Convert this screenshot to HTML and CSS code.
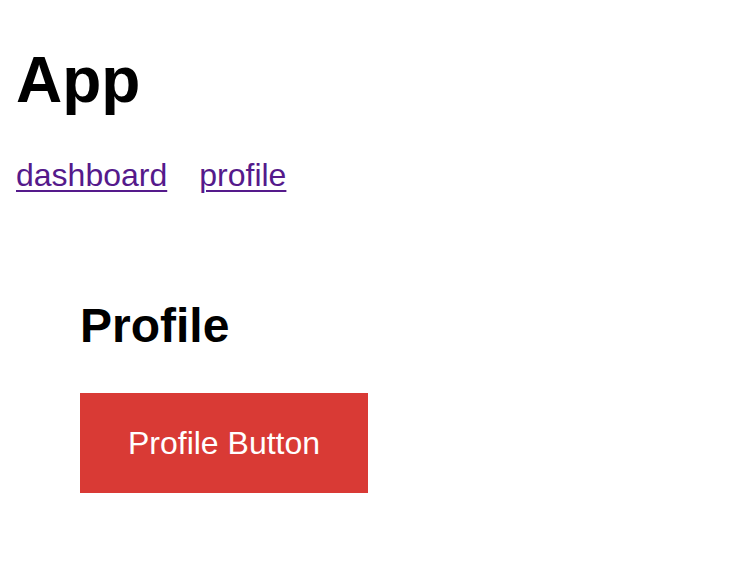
FILE: index.html
```html
<!DOCTYPE html>
<html lang="en">
  <head>
    <meta charset="UTF-8" />
    <meta name="viewport" content="width=device-width, initial-scale=1.0" />
    <title>App</title>
    <link rel="stylesheet" href="styles.css">
  </head>
  <body>
    <h1 class="app-title">App</h1>
    <nav class="nav">
      <a href="#dashboard">dashboard</a>
      <a href="#profile">profile</a>
    </nav>
    <div class="page">
      <h2 class="page-title">Profile</h2>
      <button class="profile-button">Profile Button</button>
    </div>
  </body>
</html>
```

FILE: styles.css
```css
body {
  margin: 0 16px 16px;
  font-family: "Liberation Sans", Arial, sans-serif;
  color: #000;
  background: #fff;
}
.app-title {
  font-size: 64px;
  font-weight: 700;
  margin: 44px 0 41px;
  line-height: 72px;
}
.nav {
  display: flex;
  gap: 32px;
  font-size: 32px;
  line-height: 36px;
}
.nav a {
  color: #551a8b;
  text-decoration-thickness: 2px;
  text-underline-offset: 4px;
}
.page {
  padding: 64px;
}
.page-title {
  font-size: 48px;
  font-weight: 700;
  margin: 42px 0 40px;
  line-height: 54px;
}
.profile-button {
  display: block;
  width: 288px;
  height: 100px;
  padding: 0;
  border: none;
  background-color: #d93a35;
  color: #fff;
  font-family: "Liberation Sans", Arial, sans-serif;
  font-size: 32px;
  cursor: pointer;
}
```
